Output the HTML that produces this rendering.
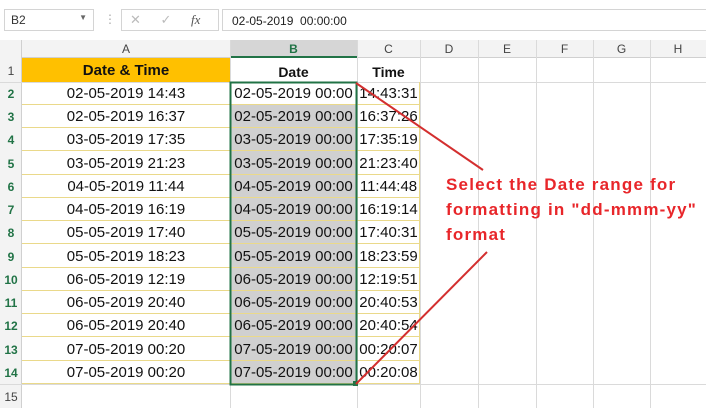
<html><head><style>
body{margin:0;width:706px;height:408px;background:#fff;font-family:"Liberation Sans",sans-serif;position:relative;overflow:hidden}
.a{position:absolute;box-sizing:border-box}
.t{font-size:14px;color:#111;text-align:center;white-space:nowrap}
</style></head><body>
<div class="a" style="left:0;top:0;width:706px;height:38px;background:#fff"></div>
<div class="a" style="left:4px;top:9px;width:90px;height:22px;border:1px solid #d4d4d4;font-size:12px;padding:3px 6px;color:#333">B2<span style="position:absolute;right:6px;top:3px;font-size:8px;color:#666">▼</span></div>
<div class="a" style="left:104px;top:12px;font-size:12px;color:#aaa">⋮</div>
<div class="a" style="left:121px;top:9px;width:98px;height:22px;border:1px solid #d4d4d4;font-size:13px;color:#bbb;padding:2px 8px;word-spacing:16px">✕ ✓ <i style="color:#555;font-family:'Liberation Serif'">fx</i></div>
<div class="a" style="left:222px;top:9px;width:490px;height:22px;border:1px solid #d4d4d4;font-size:12px;padding:4px 9px;color:#222">02-05-2019&nbsp; 00:00:00</div>
<div class="a" style="left:0;top:40px;width:706px;height:18px;background:#f3f3f3;border-bottom:1px solid #d0d0d0"></div>
<div class="a" style="left:0;top:40px;width:22px;height:368px;background:#f3f3f3;border-right:1px solid #d0d0d0"></div>
<div class="a" style="left:230px;top:40px;width:127px;height:18px;background:#d6d6d6;border-bottom:2px solid #217346"></div>
<svg class="a" style="left:0;top:0" width="706" height="408">
<g stroke="#dadada" stroke-width="1">
<line x1="230.5" y1="40" x2="230.5" y2="408"/><line x1="357.5" y1="40" x2="357.5" y2="408"/><line x1="420.5" y1="40" x2="420.5" y2="408"/><line x1="478.5" y1="40" x2="478.5" y2="408"/><line x1="536.5" y1="40" x2="536.5" y2="408"/><line x1="593.5" y1="40" x2="593.5" y2="408"/><line x1="650.5" y1="40" x2="650.5" y2="408"/>
<line x1="0" y1="82.5" x2="706" y2="82.5"/><line x1="0" y1="384.5" x2="706" y2="384.5"/>
</g>
<rect x="22" y="58" width="208" height="24" fill="#ffc000"/>
<rect x="231" y="105" width="126" height="279" fill="#d0d0d0"/>
</svg>
<div id="g"></div>
<svg class="a" style="left:0;top:0" width="706" height="408">
<rect x="230.5" y="82.5" width="126" height="302" fill="none" stroke="#217346" stroke-width="2"/>
<rect x="353" y="381" width="5" height="5" fill="#217346"/>
<line x1="356" y1="83" x2="483" y2="170" stroke="#d32f2f" stroke-width="2"/>
<line x1="487" y1="252" x2="356" y2="384" stroke="#d32f2f" stroke-width="2"/>
<g font-family="Liberation Sans" font-weight="bold" font-size="17" fill="#e8262a" letter-spacing="1.2">
<text x="446" y="190">Select the Date range for</text>
<text x="446" y="215">formatting in "dd-mmm-yy"</text>
<text x="446" y="240">format</text>
</g>
</svg>
<script>
var cols=[["A",22,230],["B",230,357],["C",357,420],["D",420,478],["E",478,536],["F",536,593],["G",593,650],["H",650,706]];
var h="";
cols.forEach(function(c){h+='<div class="a t" style="left:'+c[1]+'px;top:42px;width:'+(c[2]-c[1])+'px;font-size:12px;color:'+(c[0]=="B"?"#217346;font-weight:bold":"#444")+'">'+c[0]+'</div>';});
var A=["02-05-2019 14:43","02-05-2019 16:37","03-05-2019 17:35","03-05-2019 21:23","04-05-2019 11:44","04-05-2019 16:19","05-05-2019 17:40","05-05-2019 18:23","06-05-2019 12:19","06-05-2019 20:40","06-05-2019 20:40","07-05-2019 00:20","07-05-2019 00:20"];
var B=["02-05-2019 00:00","02-05-2019 00:00","03-05-2019 00:00","03-05-2019 00:00","04-05-2019 00:00","04-05-2019 00:00","05-05-2019 00:00","05-05-2019 00:00","06-05-2019 00:00","06-05-2019 00:00","06-05-2019 00:00","07-05-2019 00:00","07-05-2019 00:00"];
var C=["14:43:31","16:37:26","17:35:19","21:23:40","11:44:48","16:19:14","17:40:31","18:23:59","12:19:51","20:40:53","20:40:54","00:20:07","00:20:08"];
h+='<div class="a t" style="left:0;top:64px;width:22px;font-size:12px;color:#444">1</div>';
h+='<div class="a t" style="left:22px;top:62px;width:208px;font-size:15px;font-weight:bold">Date &amp; Time</div>';
h+='<div class="a t" style="left:230px;top:64px;width:127px;font-weight:bold">Date</div>';
h+='<div class="a t" style="left:357px;top:64px;width:63px;font-weight:bold">Time</div>';
for(var i=0;i<13;i++){var y=82+i*23.23;
h+='<div class="a" style="left:22px;top:'+(y+22)+'px;width:398px;height:1px;background:#ead98a"></div>';
h+='<div class="a t" style="left:0;top:'+(y+5)+'px;width:22px;font-size:12px;font-weight:bold;color:#217346">'+(i+2)+'</div>';
h+='<div class="a t" style="left:22px;top:'+(y+3)+'px;width:208px;font-size:15px">'+A[i]+'</div>';
h+='<div class="a t" style="left:230px;top:'+(y+3)+'px;width:127px;font-size:15px">'+B[i]+'</div>';
h+='<div class="a t" style="left:357px;top:'+(y+3)+'px;width:63px;font-size:15px">'+C[i]+'</div>';}
h+='<div class="a" style="left:419px;top:82px;width:1px;height:302px;background:#ead98a"></div>';
h+='<div class="a t" style="left:0;top:390px;width:22px;font-size:12px;color:#444">15</div>';
document.getElementById("g").innerHTML=h;
</script>
</body></html>
